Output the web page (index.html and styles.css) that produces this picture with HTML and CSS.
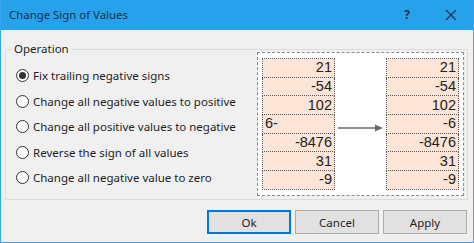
FILE: index.html
```html
<!DOCTYPE html>
<html>
<head>
<meta charset="utf-8">
<link rel="stylesheet" href="styles.css">
</head>
<body>
<div class="window">
  <div class="titlebar">
    <span class="title">Change Sign of Values</span>
    <span class="help">?</span>
    <svg class="close" width="12" height="12" viewBox="0 0 12 12"><path d="M1 1 L11 11 M11 1 L1 11" stroke="#1b3553" stroke-width="1.3" fill="none"/></svg>
  </div>
  <div class="content">
    <div class="group">
      <span class="group-label">Operation</span>
      <div class="options">
        <label class="option"><span class="radio checked"></span>Fix trailing negative signs</label>
        <label class="option"><span class="radio"></span>Change all negative values to positive</label>
        <label class="option"><span class="radio"></span>Change all positive values to negative</label>
        <label class="option"><span class="radio"></span>Reverse the sign of all values</label>
        <label class="option"><span class="radio"></span>Change all negative value to zero</label>
      </div>
      <div class="preview">
        <table class="sheet">
          <tr><td>21</td></tr>
          <tr><td>-54</td></tr>
          <tr><td>102</td></tr>
          <tr><td class="text">6-</td></tr>
          <tr><td>-8476</td></tr>
          <tr><td>31</td></tr>
          <tr><td>-9</td></tr>
        </table>
        <div class="arrow-cell">
          <svg class="arrow" width="46" height="8" viewBox="0 0 46 8"><path d="M0 4 H38" stroke="#6b6b6b" stroke-width="1.6"/><path d="M37 0.5 L45 4 L37 7.5 Z" fill="#6b6b6b"/></svg>
        </div>
        <table class="sheet">
          <tr><td>21</td></tr>
          <tr><td>-54</td></tr>
          <tr><td>102</td></tr>
          <tr><td>-6</td></tr>
          <tr><td>-8476</td></tr>
          <tr><td>31</td></tr>
          <tr><td>-9</td></tr>
        </table>
      </div>
    </div>
    <div class="buttons">
      <button class="btn default">Ok</button>
      <button class="btn">Cancel</button>
      <button class="btn">Apply</button>
    </div>
  </div>
</div>
</body>
</html>
```

FILE: styles.css
```css
html, body {
  margin: 0;
  padding: 0;
  background: #f0f0f0;
}
body {
  width: 474px;
  height: 243px;
  overflow: hidden;
  font-family: "Noto Sans", "Open Sans", sans-serif;
  font-size: 11.5px;
  color: #1e1e1e;
}
.window {
  box-sizing: border-box;
  width: 474px;
  height: 243px;
  border: 1px solid #3aa5ec;
  border-top: none;
  background: #f0f0f0;
}
.titlebar {
  height: 30px;
  background: #27a2ea;
  display: flex;
  align-items: center;
  padding-left: 8px;
  color: #14304f;
}
.title {
  font-size: 11.4px;
  flex: 1;
  margin-top: -1px;
}
.help {
  font-size: 12px;
  font-weight: bold;
  margin-right: 35px;
  margin-top: -1px;
}
.close {
  margin-right: 16px;
}
.content {
  padding: 19px 5px 0 4px;
}
.group {
  position: relative;
  box-sizing: border-box;
  height: 151px;
  border: 1px solid #dcdcdc;
  display: flex;
  padding: 2px 3px 0 0;
}
.group-label {
  position: absolute;
  left: 6px;
  top: -9px;
  padding: 0 2px;
  background: #f0f0f0;
  line-height: 16px;
  font-size: 11.5px;
}
.options {
  flex: 1;
  display: flex;
  flex-direction: column;
  padding: 15px 0 0 10px;
  gap: 8.5px;
}
.option {
  display: flex;
  align-items: center;
  height: 17px;
  white-space: nowrap;
  font-size: 11.5px;
}
.radio {
  box-sizing: border-box;
  width: 13px;
  height: 13px;
  border: 1px solid #333;
  border-radius: 50%;
  background: #fff;
  margin-right: 4px;
  display: flex;
  align-items: center;
  justify-content: center;
}
.radio.checked::after {
  content: "";
  width: 7px;
  height: 7px;
  border-radius: 50%;
  background: #333;
}
.preview {
  box-sizing: border-box;
  width: 207px;
  height: 144px;
  border: 1px dashed #8a8a8a;
  background: #fff;
  display: flex;
  align-items: flex-start;
  padding: 5px 4px 0 4px;
}
.sheet {
  border-collapse: collapse;
  width: 73px;
  font-family: "Liberation Sans", Arial, sans-serif;
  font-size: 14.5px;
  color: #222;
}
.sheet td {
  height: 17.7px;
  padding: 0 2px 0 2px;
  border: 1px dotted #555;
  background: #fce4d6;
  text-align: right;
  line-height: 17px;
}
.sheet td.text {
  text-align: left;
}
.arrow-cell {
  flex: 1;
  display: flex;
  justify-content: center;
  padding-top: 66px;
}
.buttons {
  display: flex;
  justify-content: flex-end;
  gap: 4px;
  margin-top: 10px;
  padding-right: 1px;
}
.btn {
  box-sizing: border-box;
  width: 84px;
  height: 24px;
  border: 1px solid #adadad;
  background: #e1e1e1;
  font-family: "Noto Sans", "Open Sans", sans-serif;
  font-size: 11.5px;
  color: #1e1e1e;
  padding: 0;
}
.btn.default {
  border: 2px solid #0078d7;
}
```
